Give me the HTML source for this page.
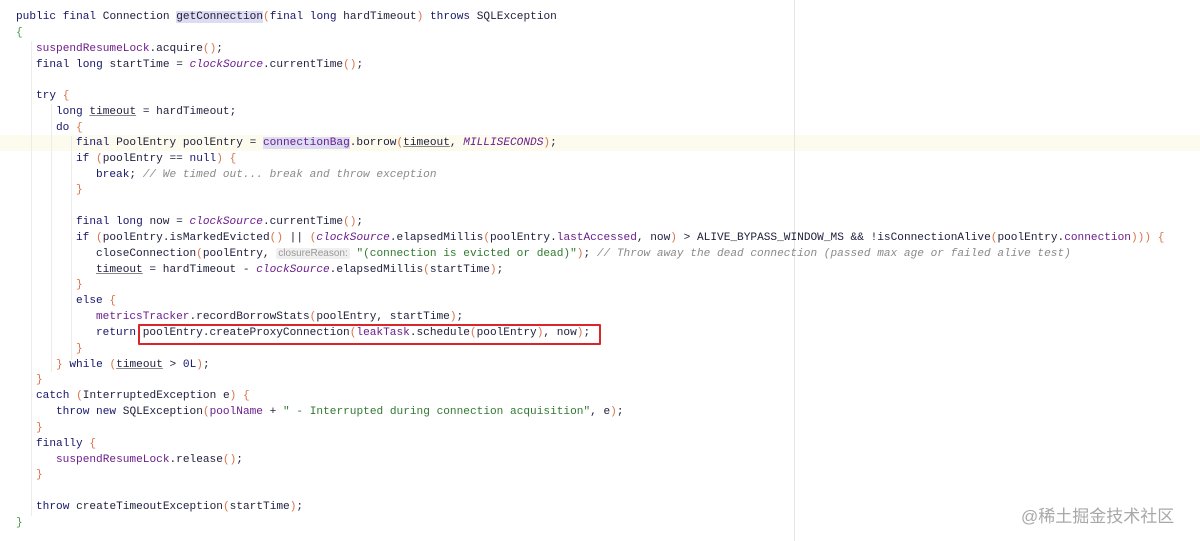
<!DOCTYPE html>
<html><head><meta charset="utf-8"><style>
body{margin:0;width:1200px;height:541px;background:#fff;overflow:hidden;position:relative;font-family:"Liberation Mono",monospace;font-size:11.13px;color:#1e1e3c}
.l{position:absolute;white-space:pre;height:16px;line-height:16px}
.k{color:#16166a}.f{color:#6c1d8c}.fi{color:#6c1d8c;font-style:italic}.s{color:#2f7a2f}.c{color:#8a8a8a;font-style:italic}.o{color:#d9744a}.g{color:#4a9a4a}
.u{text-decoration:underline;text-decoration-color:#888}
.hl{background:#dcdcf2}
.hint{font-family:"Liberation Sans",sans-serif;font-size:10px;color:#999;background:#f0f0f0;padding:0 2px;border-radius:2px}
.vg{position:absolute;width:1px;background:#ececec}
</style></head><body>
<div style="position:absolute;left:0;top:135px;width:1200px;height:16px;background:#fdfbee"></div>
<div style="position:absolute;left:794px;top:0;width:1px;height:541px;background:#e6e6e6"></div>
<div class="vg" style="left:31px;top:41px;height:475px"></div>
<div class="vg" style="left:51px;top:104px;height:268px"></div>
<div class="vg" style="left:71px;top:136px;height:224px"></div>
<div class="l" style="left:20px;top:-10px;color:#999">*/</div>
<div class="l" style="left:16px;top:9px"><span class="k">public final</span> Connection <span class="hl">getConnection</span><span class="o">(</span><span class="k">final long</span> hardTimeout<span class="o">)</span> <span class="k">throws</span> SQLException</div>
<div class="l g" style="left:16px;top:25px">{</div>
<div class="l" style="left:36px;top:41px"><span class="f">suspendResumeLock</span>.acquire<span class="o">()</span>;</div>
<div class="l" style="left:36px;top:57px"><span class="k">final long</span> startTime = <span class="fi">clockSource</span>.currentTime<span class="o">()</span>;</div>
<div class="l" style="left:36px;top:88px"><span class="k">try</span> <span class="o">{</span></div>
<div class="l" style="left:56px;top:104px"><span class="k">long</span> <span class="u">timeout</span> = hardTimeout;</div>
<div class="l" style="left:56px;top:120px"><span class="k">do</span> <span class="o">{</span></div>
<div class="l" style="left:76px;top:135px"><span class="k">final</span> PoolEntry poolEntry = <span class="f hl">connectionBag</span>.borrow<span class="o">(</span><span class="u">timeout</span>, <span class="fi">MILLISECONDS</span><span class="o">)</span>;</div>
<div class="l" style="left:76px;top:151px"><span class="k">if</span> <span class="o">(</span>poolEntry == <span class="k">null</span><span class="o">)</span> <span class="o">{</span></div>
<div class="l" style="left:96px;top:167px"><span class="k">break</span>; <span class="c">// We timed out... break and throw exception</span></div>
<div class="l o" style="left:76px;top:182px">}</div>
<div class="l" style="left:76px;top:214px"><span class="k">final long</span> now = <span class="fi">clockSource</span>.currentTime<span class="o">()</span>;</div>
<div class="l" style="left:76px;top:230px"><span class="k">if</span> <span class="o">(</span>poolEntry.isMarkedEvicted<span class="o">()</span> || <span class="o">(</span><span class="fi">clockSource</span>.elapsedMillis<span class="o">(</span>poolEntry.<span class="f">lastAccessed</span>, now<span class="o">)</span> &gt; ALIVE_BYPASS_WINDOW_MS &amp;&amp; !isConnectionAlive<span class="o">(</span>poolEntry.<span class="f">connection</span><span class="o">)))</span> <span class="o">{</span></div>
<div class="l" style="left:96px;top:246px">closeConnection<span class="o">(</span>poolEntry, <span class="hint">closureReason:</span> <span class="s">"(connection is evicted or dead)"</span><span class="o">)</span>; <span class="c">// Throw away the dead connection (passed max age or failed alive test)</span></div>
<div class="l" style="left:96px;top:262px"><span class="u">timeout</span> = hardTimeout - <span class="fi">clockSource</span>.elapsedMillis<span class="o">(</span>startTime<span class="o">)</span>;</div>
<div class="l o" style="left:76px;top:277px">}</div>
<div class="l" style="left:76px;top:293px"><span class="k">else</span> <span class="o">{</span></div>
<div class="l" style="left:96px;top:309px"><span class="f">metricsTracker</span>.recordBorrowStats<span class="o">(</span>poolEntry, startTime<span class="o">)</span>;</div>
<div class="l" style="left:96px;top:325px"><span class="k">return</span> poolEntry.createProxyConnection<span class="o">(</span><span class="f">leakTask</span>.schedule<span class="o">(</span>poolEntry<span class="o">)</span>, now<span class="o">)</span>;</div>
<div style="position:absolute;left:138px;top:324px;width:459px;height:17px;border:2px solid #d9262b;border-radius:1px"></div>
<div class="l o" style="left:76px;top:341px">}</div>
<div class="l" style="left:56px;top:357px"><span class="o">}</span> <span class="k">while</span> <span class="o">(</span><span class="u">timeout</span> &gt; <span class="k">0L</span><span class="o">)</span>;</div>
<div class="l o" style="left:36px;top:372px">}</div>
<div class="l" style="left:36px;top:388px"><span class="k">catch</span> <span class="o">(</span>InterruptedException e<span class="o">)</span> <span class="o">{</span></div>
<div class="l" style="left:56px;top:404px"><span class="k">throw new</span> SQLException<span class="o">(</span><span class="f">poolName</span> + <span class="s">" - Interrupted during connection acquisition"</span>, e<span class="o">)</span>;</div>
<div class="l o" style="left:36px;top:420px">}</div>
<div class="l" style="left:36px;top:436px"><span class="k">finally</span> <span class="o">{</span></div>
<div class="l" style="left:56px;top:452px"><span class="f">suspendResumeLock</span>.release<span class="o">()</span>;</div>
<div class="l o" style="left:36px;top:467px">}</div>
<div class="l" style="left:36px;top:499px"><span class="k">throw</span> createTimeoutException<span class="o">(</span>startTime<span class="o">)</span>;</div>
<div class="l g" style="left:16px;top:515px">}</div>
<div style="position:absolute;left:1021px;top:502px;font-family:'Liberation Sans','Noto Sans CJK SC',sans-serif;font-size:17px;color:#a8a8a8;white-space:nowrap">@稀土掘金技术社区</div>
</body></html>
